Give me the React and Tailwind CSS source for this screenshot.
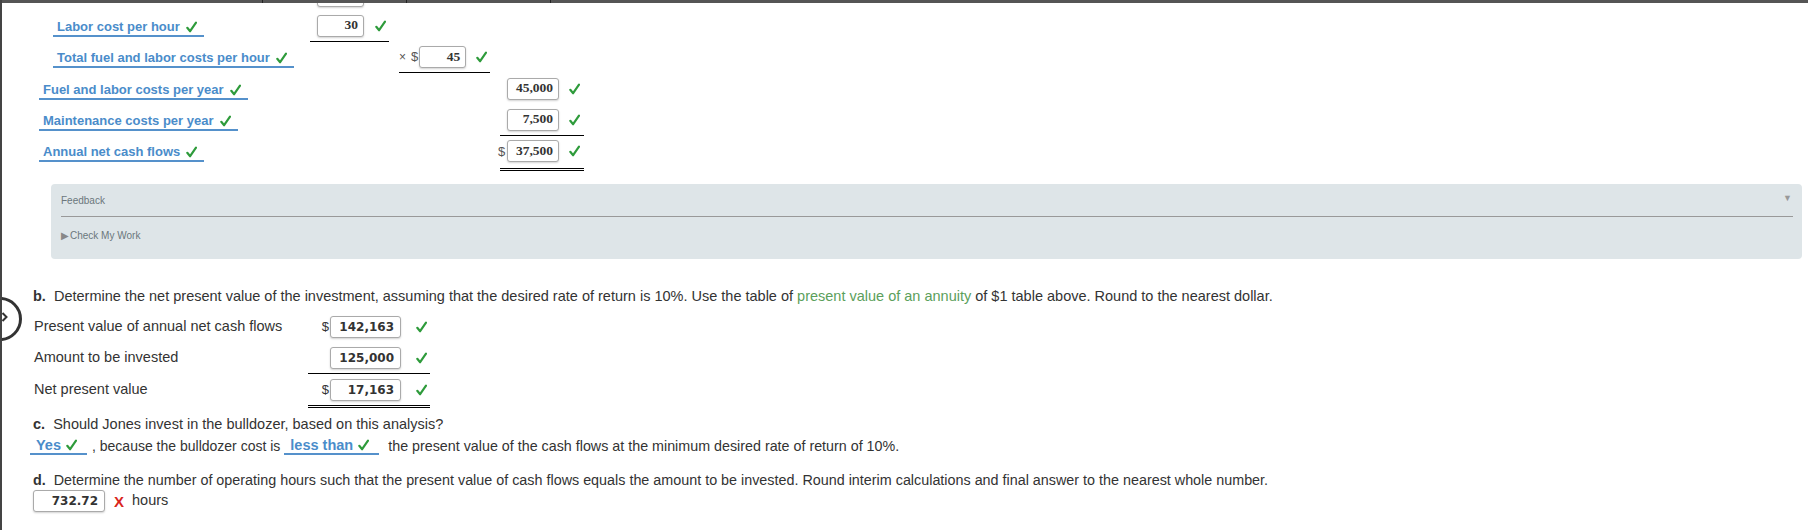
import React from "react";

// green check used after every graded answer
function Tick({ className = "" }) {
  return (
    <svg viewBox="0 0 12 12" className={"w-[11px] h-[12px] shrink-0 " + className}>
      <path d="M1.4 6.9 L4.5 10.6 L10.9 1.3" fill="none" stroke="#2e9b3b" strokeWidth="2.4" strokeLinecap="round" strokeLinejoin="round" />
    </svg>
  );
}

function Label({ children }) {
  return (
    <span className="inline-flex items-center gap-[6px] border-b-2 border-[#5591cb] pl-[4px] pr-[7px] leading-[16px] text-[13px] font-bold text-[#4a8cca]">
      {children}
      <Tick />
    </span>
  );
}

function BoxA({ value, w = "w-[47px]" }) {
  return (
    <div className={w + " h-[22px] shrink-0 bg-white border border-[#aaa] rounded-[3px] shadow-[0_1px_2px_rgba(0,0,0,0.18)] flex items-center justify-end pr-[5px] font-['Liberation_Serif',serif] font-bold text-[13.5px] text-[#333]"}>
      {value}
    </div>
  );
}

function BoxB({ value, w = "w-[71px]" }) {
  return (
    <div className={w + " h-[22px] shrink-0 bg-white border border-[#aaa] rounded-[3px] shadow-[0_1px_2px_rgba(0,0,0,0.18)] flex items-center justify-end pr-[6px] font-['DejaVu_Sans',Verdana,sans-serif] font-bold text-[12px] text-[#333]"}>
      {value}
    </div>
  );
}

function Choice({ children }) {
  return (
    <span className="inline-flex items-center gap-[5px] border-b-2 border-[#5591cb] pl-[6px] pr-[10px] leading-[16px] font-bold text-[#4a8cca]">
      {children}
      <Tick />
    </span>
  );
}

export default function App() {
  return (
    <div className="relative w-[1808px] h-[530px] overflow-hidden bg-white border-l-2 border-[#444] font-['Liberation_Sans',Arial,sans-serif] text-[#333]">
      {/* top edge of the table header above */}
      <div className="flex h-[3px] bg-[#555]">
        <div className="w-[261px] border-r border-[#222]" />
        <div className="w-[144px] border-r border-[#222]" />
        <div className="w-[144px] border-r border-[#222]" />
        <div className="flex-1" />
      </div>

      {/* a. worksheet rows */}
      <div className="flex h-[7px] overflow-hidden">
        <div className="w-[315px]" />
        <div className="-mt-[18px]"><BoxA value="" /></div>
      </div>

      <div className="flex items-center h-[31px]">
        <div className="w-[308px] pl-[51px]"><Label>Labor cost per hour</Label></div>
        <div className="flex items-center pl-[7px] gap-[11px]">
          <BoxA value="30" />
          <Tick />
        </div>
      </div>
      <div className="flex h-px">
        <div className="w-[308px]" />
        <div className="w-[79px] bg-black" />
      </div>

      <div className="flex items-center h-[30px]">
        <div className="w-[308px] pl-[51px]"><Label>Total fuel and labor costs per hour</Label></div>
        <div className="w-[89px]" />
        <div className="flex items-center">
          <span className="text-[12px] text-[#555]">×</span>
          <span className="ml-[5px] text-[13px] text-[#555]">$</span>
          <div className="ml-[1px]"><BoxA value="45" /></div>
          <Tick className="ml-[10px]" />
        </div>
      </div>
      <div className="flex h-px">
        <div className="w-[397px]" />
        <div className="w-[91px] bg-black" />
      </div>

      <div className="flex items-center h-[31px]">
        <div className="w-[496px] pl-[37px]"><Label>Fuel and labor costs per year</Label></div>
        <div className="w-[9px]" />
        <BoxA value="45,000" w="w-[52px]" />
        <Tick className="ml-[10px]" />
      </div>

      <div className="flex items-center h-[31px]">
        <div className="w-[496px] pl-[37px]"><Label>Maintenance costs per year</Label></div>
        <div className="w-[9px]" />
        <BoxA value="7,500" w="w-[52px]" />
        <Tick className="ml-[10px]" />
      </div>
      <div className="flex h-px">
        <div className="w-[498px]" />
        <div className="w-[84px] bg-black" />
      </div>

      <div className="flex items-center h-[30px]">
        <div className="w-[496px] pl-[37px]"><Label>Annual net cash flows</Label></div>
        <div className="w-[9px] text-[13px] text-[#555] leading-none">$</div>
        <BoxA value="37,500" w="w-[52px]" />
        <Tick className="ml-[10px]" />
      </div>
      <div className="flex mt-[2px]">
        <div className="w-[498px]" />
        <div className="w-[84px] h-[3px] border-y border-black" />
      </div>

      {/* feedback panel */}
      <div className="mt-[13px] ml-[49px] mr-[6px] h-[75px] rounded-[4px] bg-[#dee5e8] pt-[11px] pl-[10px] pr-[9px] text-[10px] text-[#6b777c]">
        <div className="h-[22px] border-b border-[#999] flex items-start justify-between leading-[12px]">
          <span>Feedback</span>
          <span className="text-[9px] text-[#999] -mt-[3px] pr-[1px]">▼</span>
        </div>
        <div className="mt-[13px] leading-[12px] flex items-center">
          <span className="text-[10px] text-[#888] mr-[1px]">▶</span>
          <span>Check My Work</span>
        </div>
      </div>

      {/* b. */}
      <div className="pl-[31px] text-[14.5px]">
        <p className="mt-[28px] leading-[18px]">
          <b>b.</b>&nbsp; Determine the net present value of the investment, assuming that the desired rate of return is 10%. Use the table of{" "}
          <span className="text-[#5ba05b]">present value of an annuity</span> of $1 table above. Round to the nearest dollar.
        </p>

        <div className="mt-[6px]">
          <div className="flex items-center h-[31px]">
            <div className="w-[277px] pl-[1px]">Present value of annual net cash flows</div>
            <div className="w-[20px] text-right pr-[1px] text-[13px]">$</div>
            <BoxB value="142,163" />
            <Tick className="ml-[15px]" />
          </div>
          <div className="flex items-center h-[31px]">
            <div className="w-[297px] pl-[1px]">Amount to be invested</div>
            <BoxB value="125,000" />
            <Tick className="ml-[15px]" />
          </div>
          <div className="flex h-px">
            <div className="w-[275px]" />
            <div className="w-[122px] bg-black" />
          </div>
          <div className="flex items-center h-[31px]">
            <div className="w-[277px] pl-[1px]">Net present value</div>
            <div className="w-[20px] text-right pr-[1px] text-[13px]">$</div>
            <BoxB value="17,163" />
            <Tick className="ml-[15px]" />
          </div>
          <div className="flex">
            <div className="w-[275px]" />
            <div className="w-[122px] h-[3px] border-y border-black" />
          </div>
        </div>

        {/* c. */}
        <p className="mt-[7px] leading-[18px]">
          <b>c.</b>&nbsp; Should Jones invest in the bulldozer, based on this analysis?
        </p>
        <div className="mt-[4px] -ml-[3px] flex items-center leading-[16px]">
          <Choice>Yes</Choice>
          <span className="ml-[5px] text-[14px]">, because the bulldozer cost is</span>
          <span className="ml-[4px]"><Choice>less than</Choice></span>
          <span className="ml-[9px] text-[14.3px]">the present value of the cash flows at the minimum desired rate of return of 10%.</span>
        </div>

        {/* d. */}
        <p className="mt-[16px] leading-[18px] text-[14.35px]">
          <b>d.</b>&nbsp; Determine the number of operating hours such that the present value of cash flows equals the amount to be invested. Round interim calculations and final answer to the nearest whole number.
        </p>
        <div className="mt-[1px] flex items-center">
          <BoxB value="732.72" w="w-[72px]" />
          <span className="ml-[9px] font-bold text-[15px] text-[#d9251c] leading-none">X</span>
          <span className="ml-[8px]">hours</span>
        </div>
      </div>

      {/* side navigation handle */}
      <div className="absolute left-[-24px] top-[297px] w-[44px] h-[44px] rounded-full border-[3px] border-[#333] bg-white" />
      <svg viewBox="0 0 6 10" className="absolute left-0 top-[312px] w-[6px] h-[10px]">
        <path d="M0.5 1 L4.5 5 L0.5 9" fill="none" stroke="#333" strokeWidth="2" />
      </svg>
    </div>
  );
}
